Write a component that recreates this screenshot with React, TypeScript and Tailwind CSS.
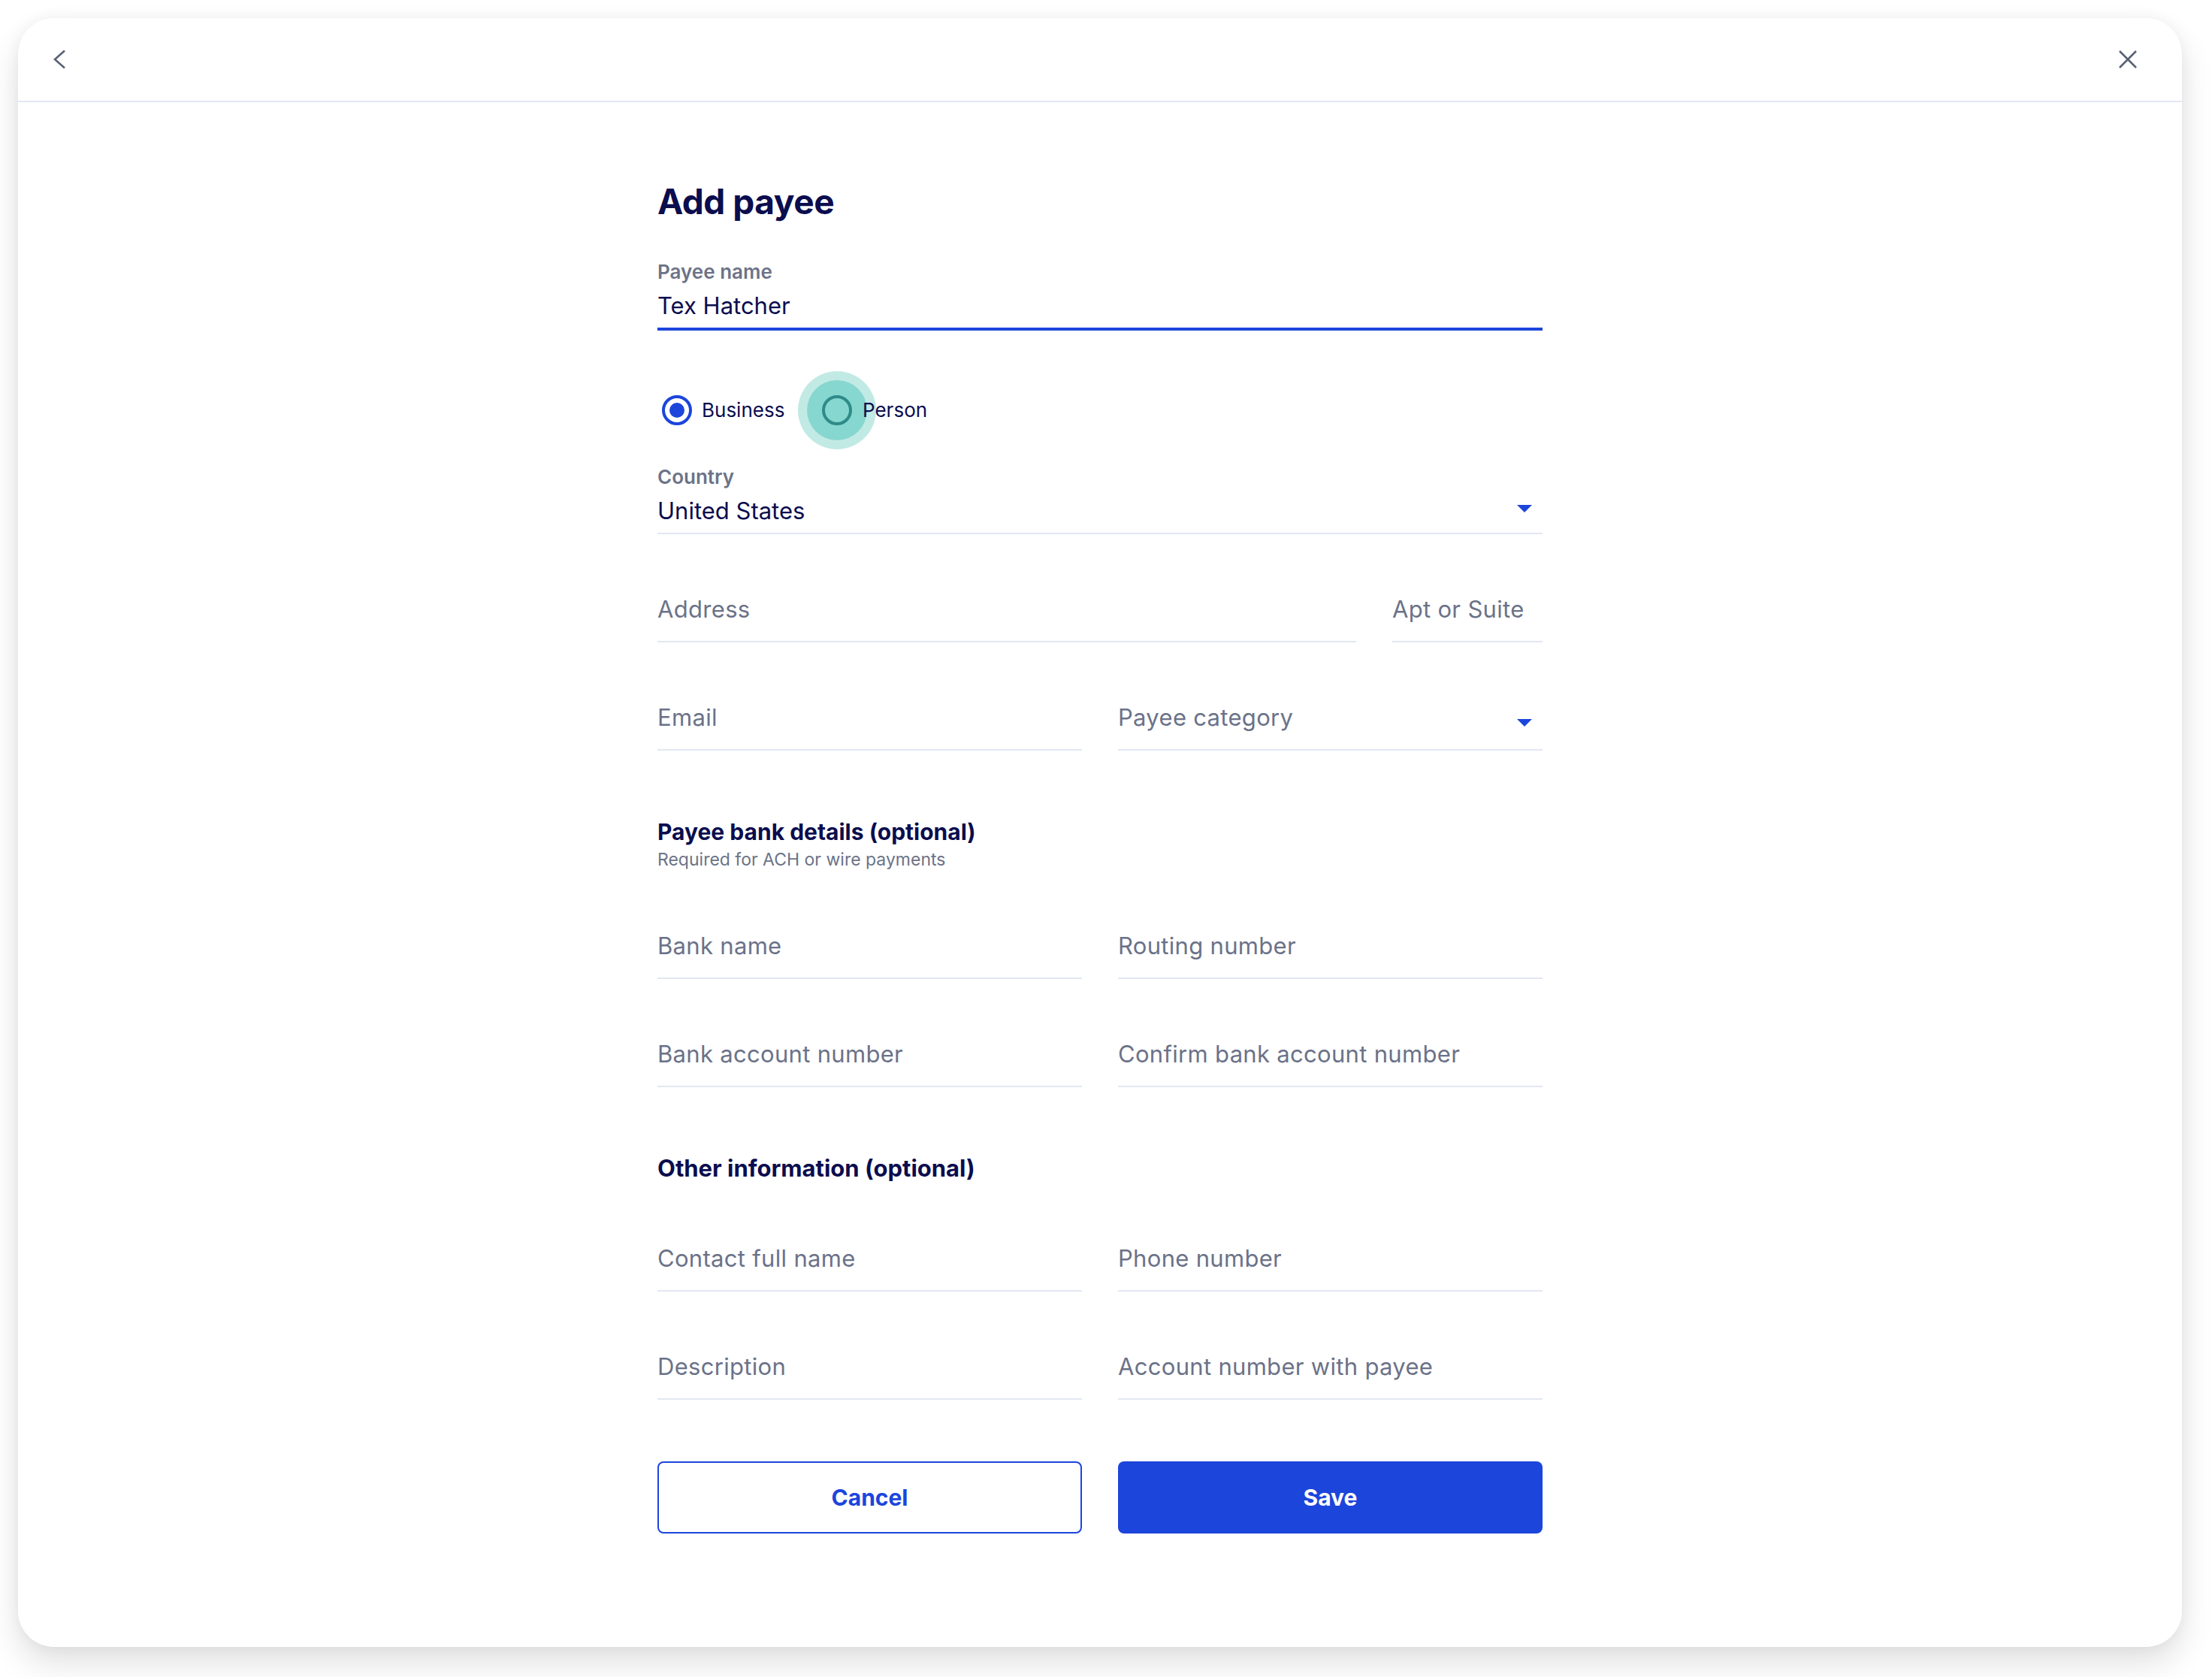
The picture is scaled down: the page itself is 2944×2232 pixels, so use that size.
import React from "react";

const NAVY = "text-[#0b0d4e]";

function Caret({ className = "" }: { className?: string }) {
  return (
    <svg width="20" height="10" viewBox="0 0 20 10" className={className}>
      <path d="M0 0 L20 0 L10 10 Z" fill="#1c45dc" />
    </svg>
  );
}

function Field({ placeholder, caret = false }: { placeholder: string; caret?: boolean }) {
  return (
    <div className="pt-[80px] min-w-0">
      <div className="relative border-b-2 border-[#e2e7f1] pb-[22px] text-[31px] leading-[40px] tracking-[0.01em] text-[#6b7288] whitespace-nowrap">
        {placeholder}
        {caret && (
          <div className="absolute right-[14px] top-[22px] flex">
            <Caret />
          </div>
        )}
      </div>
    </div>
  );
}

export default function App() {
  return (
    <div className="min-h-[2232px] w-full bg-white p-[24px] font-['Inter',sans-serif]">
      <div className="flex h-[2168px] w-[2880px] flex-col rounded-[48px] bg-white shadow-[0_0_20px_rgba(0,0,0,0.05),0_22px_44px_rgba(0,0,0,0.12)]">
        {/* Header */}
        <div className="flex h-[112px] shrink-0 items-center justify-between border-b-2 border-[#e3e7f1] pl-[47px] pr-[60px]">
          <svg width="16" height="26" viewBox="0 0 16 26" fill="none">
            <path d="M15 1.5 L2 13 L15 24.5" stroke="#596176" strokeWidth="2.6" />
          </svg>
          <svg width="24" height="24" viewBox="0 0 24 24" fill="none">
            <path d="M1 1 L23 23 M23 1 L1 23" stroke="#596176" strokeWidth="2.6" />
          </svg>
        </div>

        {/* Form */}
        <div className="mx-auto flex w-[1178px] flex-col">
          <h1 className={`mt-[104px] text-[46px] leading-[56px] font-bold tracking-[-0.01em] ${NAVY}`}>Add payee</h1>

          <div className="mt-[50px] text-[26px] leading-[32px] font-semibold text-[#6c7387]">Payee name</div>
          <div className={`mt-[9px] border-b-4 border-[#1c45dc] pb-[9px] text-[31px] leading-[40px] ${NAVY}`}>Tex Hatcher</div>

          {/* Radio row */}
          <div className="mt-[86px] flex h-[40px] items-center pl-[6px]">
            <div className="flex w-[213px] items-center">
              <div className="flex h-[40px] w-[40px] items-center justify-center rounded-full border-[4px] border-[#1c45dc]">
                <div className="h-[20px] w-[20px] rounded-full bg-[#1c45dc]" />
              </div>
              <span className={`ml-[13px] text-[26px] leading-[40px] ${NAVY}`}>Business</span>
            </div>
            <div className="flex items-center">
              <div className="relative h-[40px] w-[40px]">
                <div className="absolute left-[-32px] top-[-32px] h-[104px] w-[104px] rounded-full bg-[#c2eae5]" />
                <div className="absolute left-[-20px] top-[-20px] h-[80px] w-[80px] rounded-full bg-[#86d7cf]" />
                <div className="absolute inset-0 rounded-full border-[4px] border-[#2f8b89]" />
              </div>
              <span className={`relative ml-[14px] text-[26px] leading-[40px] ${NAVY}`}>Person</span>
            </div>
          </div>

          {/* Country */}
          <div className="mt-[53px] text-[26px] leading-[32px] font-semibold text-[#6c7387]">Country</div>
          <div className={`relative mt-[9px] border-b-2 border-[#e2e7f1] pb-[9px] text-[31px] leading-[40px] ${NAVY}`}>
            United States
            <div className="absolute right-[14px] top-[12px] flex">
              <Caret />
            </div>
          </div>

          {/* Address */}
          <div className="flex gap-[48px]">
            <div className="flex-1">
              <Field placeholder="Address" />
            </div>
            <div className="w-[200px]">
              <Field placeholder="Apt or Suite" />
            </div>
          </div>

          <div className="grid grid-cols-2 gap-x-[48px]">
            <Field placeholder="Email" />
            <Field placeholder="Payee category" caret />
          </div>

          {/* Bank details */}
          <div className={`mt-[88px] text-[30px] leading-[40px] font-bold ${NAVY}`}>Payee bank details (optional)</div>
          <div className="mt-[2px] text-[23px] leading-[30px] text-[#6c7387]">Required for ACH or wire payments</div>

          <div className="grid grid-cols-2 gap-x-[48px]">
            <Field placeholder="Bank name" />
            <Field placeholder="Routing number" />
            <Field placeholder="Bank account number" />
            <Field placeholder="Confirm bank account number" />
          </div>

          {/* Other information */}
          <div className={`mt-[88px] text-[31px] leading-[40px] font-bold ${NAVY}`}>Other information (optional)</div>

          <div className="grid grid-cols-2 gap-x-[48px]">
            <Field placeholder="Contact full name" />
            <Field placeholder="Phone number" />
            <Field placeholder="Description" />
            <Field placeholder="Account number with payee" />
          </div>

          {/* Buttons */}
          <div className="mt-[82px] grid grid-cols-2 gap-x-[48px]">
            <button className="flex h-[96px] items-center justify-center rounded-[8px] border-2 border-[#1c45dc] bg-white text-[30px] font-bold text-[#1c45dc]">
              Cancel
            </button>
            <button className="flex h-[96px] items-center justify-center rounded-[8px] bg-[#1c45dc] text-[30px] font-bold text-white">
              Save
            </button>
          </div>
        </div>
      </div>
    </div>
  );
}
